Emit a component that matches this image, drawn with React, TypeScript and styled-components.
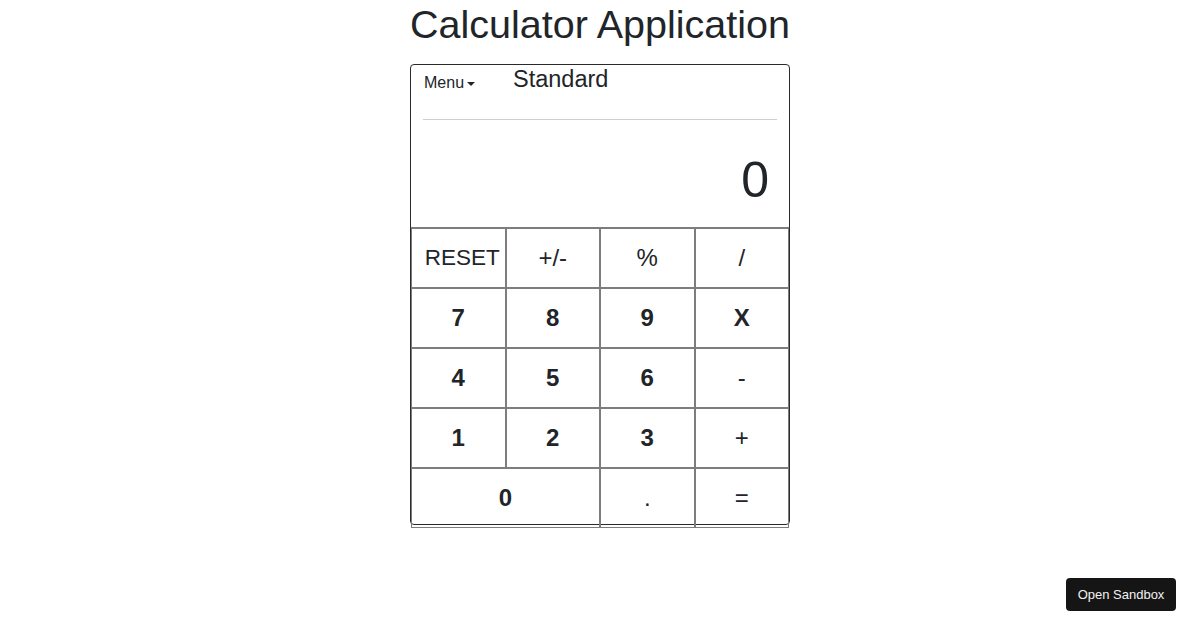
import styled, { createGlobalStyle } from "styled-components";

const GlobalStyle = createGlobalStyle`
	body {
		margin: 0;
		background: #fff;
		color: #212529;
		font-family: "Liberation Sans", Arial, sans-serif;
	}
`;

type Key = { label: string; bold?: boolean; wide?: boolean; small?: boolean };

const keys: Key[] = [
	{ label: "RESET", small: true },
	{ label: "+/-" },
	{ label: "%" },
	{ label: "/" },
	{ label: "7", bold: true },
	{ label: "8", bold: true },
	{ label: "9", bold: true },
	{ label: "X", bold: true },
	{ label: "4", bold: true },
	{ label: "5", bold: true },
	{ label: "6", bold: true },
	{ label: "-" },
	{ label: "1", bold: true },
	{ label: "2", bold: true },
	{ label: "3", bold: true },
	{ label: "+" },
	{ label: "0", bold: true, wide: true },
	{ label: "." },
	{ label: "=" },
];

const App: React.FC = () => {
	return (
		<Page>
			<GlobalStyle />
			<Title>Calculator Application</Title>
			<Card>
				<Header>
					<MenuToggle>
						Menu
						<Caret />
					</MenuToggle>
					<Mode>Standard</Mode>
				</Header>
				<Rule />
				<Display>0</Display>
				<Keypad>
					{keys.map((k) => (
						<KeyButton key={k.label} $bold={k.bold} $wide={k.wide} $small={k.small}>
							{k.label}
						</KeyButton>
					))}
				</Keypad>
			</Card>
			<SandboxButton>Open Sandbox</SandboxButton>
		</Page>
	);
};

export default App;

const Page = styled.div`
	width: 1200px;
	height: 630px;
	display: flex;
	flex-direction: column;
	align-items: center;
`;

const Title = styled.h1`
	margin: 0;
	font-size: 39.5px;
	font-weight: 400;
	line-height: 48px;
	color: #212529;
`;

const Card = styled.div`
	box-sizing: border-box;
	margin-top: 16px;
	width: 380px;
	height: 461px;
	border: 1px solid #2a2a2a;
	border-radius: 4px;
	display: flex;
	flex-direction: column;

	& > * {
		flex-shrink: 0;
	}
`;

const Header = styled.div`
	height: 54px;
	display: flex;
	align-items: flex-start;
`;

const MenuToggle = styled.button`
	margin: 0 0 0 1px;
	padding: 6px 12px;
	border: none;
	background: transparent;
	font-family: inherit;
	font-size: 16px;
	line-height: 24px;
	color: #212529;
	display: flex;
	align-items: center;
`;

const Caret = styled.span`
	margin-left: 3px;
	margin-top: 1px;
	width: 0;
	height: 0;
	border-left: 4px solid transparent;
	border-right: 4px solid transparent;
	border-top: 4.5px solid #212529;
`;

const Mode = styled.div`
	margin-left: 26px;
	font-size: 23.5px;
	line-height: 28px;
	color: #212529;
`;

const Rule = styled.div`
	margin: 0 12px;
	height: 1px;
	background: #cfcfcf;
`;

const Display = styled.div`
	box-sizing: border-box;
	height: 108px;
	border-bottom: 1px solid #7d7d7d;
	display: flex;
	align-items: flex-end;
	justify-content: flex-end;
	padding: 0 20px 21px 0;
	font-size: 50px;
	line-height: 52px;
	color: #212529;
`;

const Keypad = styled.div`
	display: grid;
	grid-template-columns: repeat(4, 1fr);
	grid-auto-rows: 60px;
`;

const KeyButton = styled.button<{ $bold?: boolean; $wide?: boolean; $small?: boolean }>`
	box-sizing: border-box;
	margin: 0;
	padding: ${(p) => (p.$small ? "0 0 0 8px" : "0")};
	border: 1px solid #7d7d7d;
	background: transparent;
	font-family: inherit;
	font-size: ${(p) => (p.$small ? "22.5px" : "24px")};
	font-weight: ${(p) => (p.$bold ? 700 : 400)};
	color: #212529;
	grid-column: ${(p) => (p.$wide ? "span 2" : "auto")};
`;

const SandboxButton = styled.button`
	position: fixed;
	right: 24px;
	bottom: 19px;
	width: 110px;
	height: 33px;
	border: none;
	border-radius: 4px;
	background: #151515;
	color: #f2f2f2;
	font-family: inherit;
	font-size: 13px;
`;
